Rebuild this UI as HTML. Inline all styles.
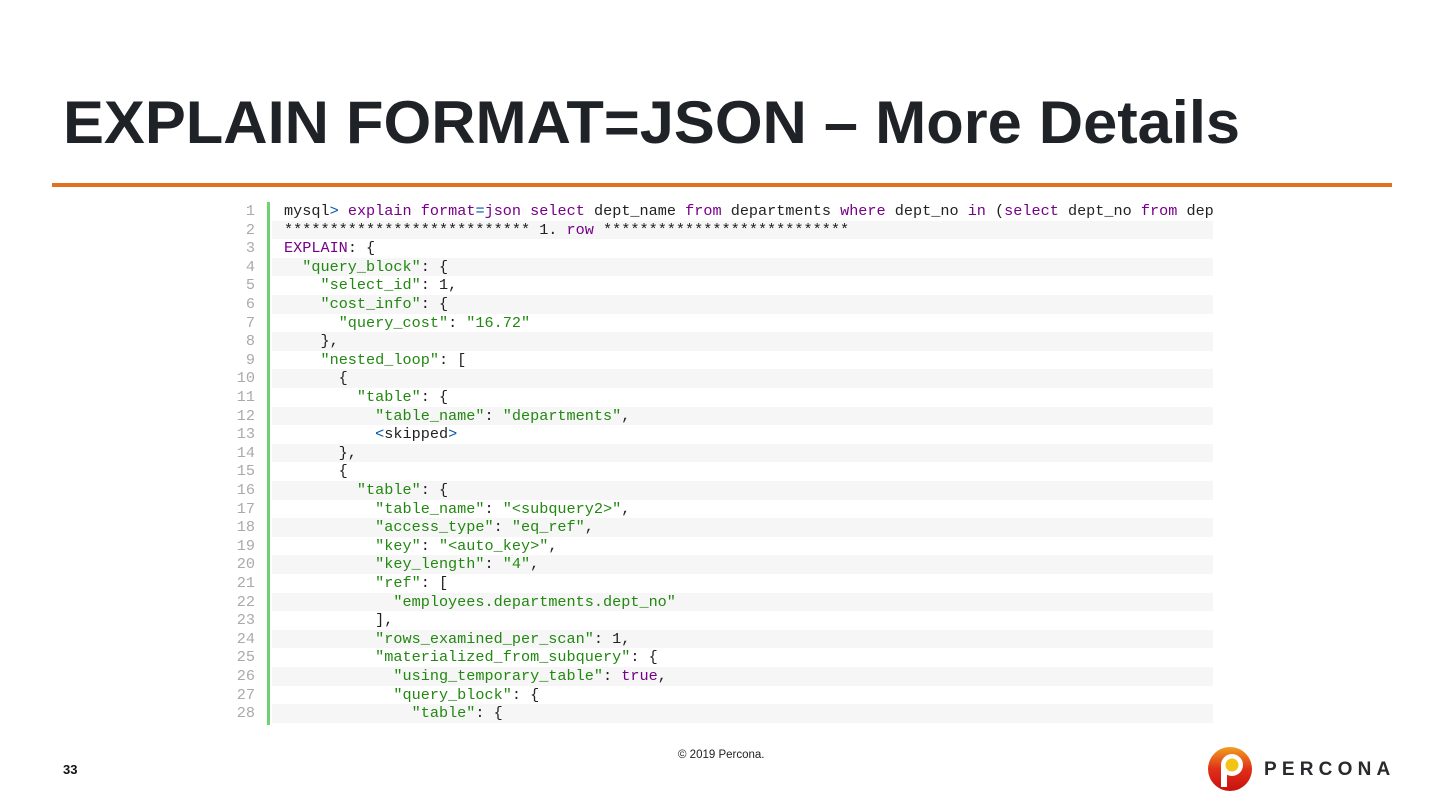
<!DOCTYPE html>
<html><head><meta charset="utf-8"><style>
body{margin:0;width:1440px;height:810px;background:#fff;position:relative;overflow:hidden;font-family:"Liberation Sans",sans-serif}
.bar{position:absolute;left:52px;top:183px;width:1340px;height:4px;background:#e2701f}
.code{position:absolute;left:228px;top:202px;width:985px;height:523px;overflow:hidden}
.gl{position:absolute;left:39px;top:0;width:3px;height:523px;background:#6fd16f}
.ln{position:absolute;left:0;width:27px;text-align:right;color:#aaa;font:15.2px/18.6px "Liberation Mono",monospace}
.row{position:absolute;left:44px;width:941px;height:18.6px;font:15.2px/18.6px "Liberation Mono",monospace;white-space:pre;color:#222;padding-left:12px;box-sizing:border-box}
.row.s{background:#f6f6f6}
.k{color:#708}.st{color:#281}.o{color:#05a}
</style></head><body>
<svg style="position:absolute;left:0;top:0" width="1440" height="180"><text x="63" y="143" textLength="1177" lengthAdjust="spacingAndGlyphs" font-family="Liberation Sans" font-weight="bold" font-size="60" fill="#1f2328">EXPLAIN FORMAT=JSON – More Details</text></svg>
<div class="bar"></div>
<div class="code">
<div class="gl"></div>
<div class="ln" style="top:0">1</div><div class="row" style="top:0">mysql<span class="o">&gt;</span> <span class="k">explain</span> <span class="k">format</span><span class="o">=</span><span class="k">json</span> <span class="k">select</span> dept_name <span class="k">from</span> departments <span class="k">where</span> dept_no <span class="k">in</span> (<span class="k">select</span> dept_no <span class="k">from</span> dept_emp)</div>
<div class="ln" style="top:18.6px">2</div><div class="row s" style="top:18.6px">*************************** 1. <span class="k">row</span> ***************************</div>
<div class="ln" style="top:37.2px">3</div><div class="row" style="top:37.2px"><span class="k">EXPLAIN</span>: {</div>
<div class="ln" style="top:55.8px">4</div><div class="row s" style="top:55.8px">  <span class="st">"query_block"</span>: {</div>
<div class="ln" style="top:74.4px">5</div><div class="row" style="top:74.4px">    <span class="st">"select_id"</span>: 1,</div>
<div class="ln" style="top:93px">6</div><div class="row s" style="top:93px">    <span class="st">"cost_info"</span>: {</div>
<div class="ln" style="top:111.6px">7</div><div class="row" style="top:111.6px">      <span class="st">"query_cost"</span>: <span class="st">"16.72"</span></div>
<div class="ln" style="top:130.2px">8</div><div class="row s" style="top:130.2px">    },</div>
<div class="ln" style="top:148.8px">9</div><div class="row" style="top:148.8px">    <span class="st">"nested_loop"</span>: [</div>
<div class="ln" style="top:167.4px">10</div><div class="row s" style="top:167.4px">      {</div>
<div class="ln" style="top:186px">11</div><div class="row" style="top:186px">        <span class="st">"table"</span>: {</div>
<div class="ln" style="top:204.6px">12</div><div class="row s" style="top:204.6px">          <span class="st">"table_name"</span>: <span class="st">"departments"</span>,</div>
<div class="ln" style="top:223.2px">13</div><div class="row" style="top:223.2px">          <span class="o">&lt;</span>skipped<span class="o">&gt;</span></div>
<div class="ln" style="top:241.8px">14</div><div class="row s" style="top:241.8px">      },</div>
<div class="ln" style="top:260.4px">15</div><div class="row" style="top:260.4px">      {</div>
<div class="ln" style="top:279px">16</div><div class="row s" style="top:279px">        <span class="st">"table"</span>: {</div>
<div class="ln" style="top:297.6px">17</div><div class="row" style="top:297.6px">          <span class="st">"table_name"</span>: <span class="st">"&lt;subquery2&gt;"</span>,</div>
<div class="ln" style="top:316.2px">18</div><div class="row s" style="top:316.2px">          <span class="st">"access_type"</span>: <span class="st">"eq_ref"</span>,</div>
<div class="ln" style="top:334.8px">19</div><div class="row" style="top:334.8px">          <span class="st">"key"</span>: <span class="st">"&lt;auto_key&gt;"</span>,</div>
<div class="ln" style="top:353.4px">20</div><div class="row s" style="top:353.4px">          <span class="st">"key_length"</span>: <span class="st">"4"</span>,</div>
<div class="ln" style="top:372px">21</div><div class="row" style="top:372px">          <span class="st">"ref"</span>: [</div>
<div class="ln" style="top:390.6px">22</div><div class="row s" style="top:390.6px">            <span class="st">"employees.departments.dept_no"</span></div>
<div class="ln" style="top:409.2px">23</div><div class="row" style="top:409.2px">          ],</div>
<div class="ln" style="top:427.8px">24</div><div class="row s" style="top:427.8px">          <span class="st">"rows_examined_per_scan"</span>: 1,</div>
<div class="ln" style="top:446.4px">25</div><div class="row" style="top:446.4px">          <span class="st">"materialized_from_subquery"</span>: {</div>
<div class="ln" style="top:465px">26</div><div class="row s" style="top:465px">            <span class="st">"using_temporary_table"</span>: <span class="k">true</span>,</div>
<div class="ln" style="top:483.6px">27</div><div class="row" style="top:483.6px">            <span class="st">"query_block"</span>: {</div>
<div class="ln" style="top:502.2px">28</div><div class="row s" style="top:502.2px">              <span class="st">"table"</span>: {</div>
</div>
<div style="position:absolute;left:678px;top:749px;font-size:11.5px;color:#222">© 2019 Percona.</div>
<div style="position:absolute;left:63px;top:762px;font-size:13px;font-weight:bold;color:#111">33</div>
<svg style="position:absolute;left:1206px;top:745px" width="48" height="48" viewBox="0 0 48 48">
<defs><linearGradient id="g" x1="0" y1="0" x2="0" y2="1"><stop offset="0" stop-color="#f0a020"/><stop offset="0.5" stop-color="#e03018"/><stop offset="1" stop-color="#c81010"/></linearGradient></defs>
<circle cx="24" cy="24" r="22" fill="url(#g)"/>
<circle cx="26" cy="20" r="11" fill="#fff"/>
<rect x="15" y="20" width="6" height="22" fill="#fff"/>
<circle cx="26" cy="20" r="6.5" fill="#f2c418"/>
</svg>
<div style="position:absolute;left:1264px;top:759px;font-size:19px;font-weight:bold;letter-spacing:5.2px;color:#2a2a2e">PERCONA</div>
</body></html>
